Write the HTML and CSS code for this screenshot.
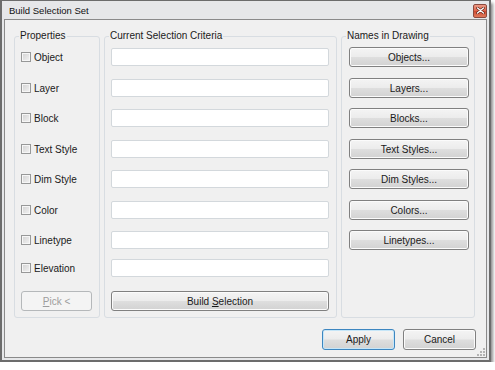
FILE: index.html
```html
<!DOCTYPE html>
<html lang="en">
<head>
    <meta charset="UTF-8">
    <title>Build Selection Set</title>
    <link rel="stylesheet" href="styles.css">
</head>
<body>
    <div class="window">
        <div class="titlebar">
            <span class="title">Build Selection Set</span>
            <span class="close">
                <svg width="9" height="7" viewBox="0 0 9 7">
                    <path d="M1.5 1 L7.5 6 M7.5 1 L1.5 6" stroke="#5a2016" stroke-width="2.6" stroke-linecap="round"/>
                    <path d="M1.5 1 L7.5 6 M7.5 1 L1.5 6" stroke="#fff" stroke-width="1.4" stroke-linecap="round"/>
                </svg>
            </span>
        </div>
        <div class="client">
            <div class="groups">
                <fieldset class="group props">
                    <legend>Properties</legend>
                    <div class="rows">
                        <label class="row"><span class="check"></span>Object</label>
                        <label class="row"><span class="check"></span>Layer</label>
                        <label class="row"><span class="check"></span>Block</label>
                        <label class="row"><span class="check"></span>Text Style</label>
                        <label class="row"><span class="check"></span>Dim Style</label>
                        <label class="row"><span class="check"></span>Color</label>
                        <label class="row"><span class="check"></span>Linetype</label>
                        <label class="row"><span class="check"></span>Elevation</label>
                    </div>
                    <button class="btn pick" disabled><u>P</u>ick &lt;</button>
                </fieldset>
                <fieldset class="group criteria">
                    <legend>Current Selection Criteria</legend>
                    <div class="rows">
                        <div class="row"><span class="field"></span></div>
                        <div class="row"><span class="field"></span></div>
                        <div class="row"><span class="field"></span></div>
                        <div class="row"><span class="field"></span></div>
                        <div class="row"><span class="field"></span></div>
                        <div class="row"><span class="field"></span></div>
                        <div class="row"><span class="field"></span></div>
                        <div class="row"><span class="field"></span></div>
                    </div>
                    <button class="btn build">Build <u>S</u>election</button>
                </fieldset>
                <fieldset class="group names">
                    <legend>Names in Drawing</legend>
                    <div class="rows">
                        <div class="row"><button class="btn wide">Objects...</button></div>
                        <div class="row"><button class="btn wide">Layers...</button></div>
                        <div class="row"><button class="btn wide">Blocks...</button></div>
                        <div class="row"><button class="btn wide">Text Styles...</button></div>
                        <div class="row"><button class="btn wide">Dim Styles...</button></div>
                        <div class="row"><button class="btn wide">Colors...</button></div>
                        <div class="row"><button class="btn wide">Linetypes...</button></div>
                    </div>
                </fieldset>
            </div>
            <div class="footer">
                <button class="btn action default">Apply</button>
                <button class="btn action">Cancel</button>
            </div>
            <span class="grip">
                <svg width="8" height="8" viewBox="0 0 8 8" fill="#b4b4b4">
                    <rect x="6" y="0" width="2" height="2"/>
                    <rect x="3" y="3" width="2" height="2"/>
                    <rect x="6" y="3" width="2" height="2"/>
                    <rect x="0" y="6" width="2" height="2"/>
                    <rect x="3" y="6" width="2" height="2"/>
                    <rect x="6" y="6" width="2" height="2"/>
                </svg>
            </span>
        </div>
    </div>
</body>
</html>
```

FILE: styles.css
```css
body {
    margin: 0;
    background-color: #ffffff;
    font-family: "Liberation Sans", Arial, sans-serif;
    font-size: 10px;
    color: #1a1a1a;
}
.window {
    width: 491px;
    height: 362px;
    box-sizing: border-box;
    background-color: #e6e7e9;
    border: 2px solid #6c6c6c;
    border-top-width: 1px;
    padding: 0 2px 2px 2px;
    box-shadow: 2px 3px 3px rgba(0, 0, 0, 0.45);
}
.titlebar {
    height: 18px;
    display: flex;
    align-items: center;
    justify-content: space-between;
    padding-left: 5px;
}
.title {
    font-size: 9.5px;
    color: #111;
}
.close {
    width: 12px;
    height: 12px;
    margin-right: 0;
    margin-top: 1px;
    display: flex;
    align-items: center;
    justify-content: center;
    border: 1px solid #8d4a3e;
    border-radius: 2px;
    background: linear-gradient(#eb9a86, #de6248 50%, #cf4a30 51%, #e07a5c);
}
.client {
    position: relative;
    height: 339px;
    box-sizing: border-box;
    background-color: #f0f0f0;
    border: 1px solid #8a8a8a;
    padding: 10px 10px 0 9px;
}
.groups {
    display: flex;
    gap: 4px;
    align-items: stretch;
}
.group {
    margin: 0;
    min-width: 0;
    padding: 5px 7px 6px 6px;
    border: 1px solid #d8dde2;
    border-radius: 3px;
    box-sizing: border-box;
}
.group legend {
    padding: 0 1px;
    margin-left: -2px;
    line-height: 12px;
    color: #1a1a1a;
}
.props {
    width: 86px;
}
.criteria {
    width: 233px;
}
.names {
    width: 134px;
    padding: 5px 5px 6px 7px;
}
.names legend {
    margin-left: -3px;
}
.rows {
    display: flex;
    flex-direction: column;
    gap: 10px;
}
.row {
    height: 20px;
    display: flex;
    align-items: center;
}
.row:nth-child(even) {
    margin-top: 1px;
}
.row:nth-child(8) {
    margin-top: -2px;
}
.check {
    width: 8px;
    height: 8px;
    margin-right: 3px;
    border: 1px solid #979898;
    background: linear-gradient(135deg, #d2d2d2, #f3f3f3);
    box-shadow: inset 0 0 0 1px #f6f6f6;
}
.field {
    width: 100%;
    height: 18px;
    box-sizing: border-box;
    background-color: #ffffff;
    border: 1px solid #d3d8dc;
    border-radius: 2px;
}
.btn {
    height: 20px;
    box-sizing: border-box;
    padding: 0;
    font-family: "Liberation Sans", Arial, sans-serif;
    font-size: 10px;
    color: #1a1a1a;
    border: 1px solid #808080;
    border-radius: 3px;
    background: linear-gradient(#f4f4f4, #ececec 48%, #dedede 52%, #d2d2d2);
    box-shadow: inset 0 0 0 1px #fbfbfb;
}
.btn u {
    text-decoration-thickness: 1px;
}
.wide {
    width: 120px;
}
.pick {
    width: 71px;
    margin-top: 13px;
    color: #9d9d9d;
    border-color: #b5b8ba;
    background: #f4f4f4;
    box-shadow: none;
}
.build {
    width: 100%;
    margin-top: 13px;
}
.footer {
    display: flex;
    justify-content: flex-end;
    gap: 8px;
    margin-top: 11px;
}
.action {
    width: 73px;
    height: 21px;
}
.default {
    border-color: #3d86c0;
    box-shadow: inset 0 0 0 1px #c6e6f8;
}
.grip {
    position: absolute;
    right: 1px;
    bottom: 1px;
    width: 8px;
    height: 8px;
    display: flex;
}
```
